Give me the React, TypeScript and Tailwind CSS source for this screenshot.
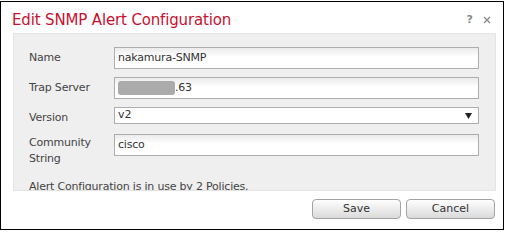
import React from "react"

const Field = ({ children }: { children: React.ReactNode }) => (
  <div className="w-[365px] h-[22px] border border-[#adadad] bg-[linear-gradient(#ebebeb,#ffffff_45%)] flex items-center pl-[3px] text-[11px] tracking-[-0.2px] text-[#333]">
    {children}
  </div>
)

const Label = ({ children }: { children: React.ReactNode }) => (
  <div className="w-[85px] shrink-0 text-[11px] leading-[16px] tracking-[-0.2px] text-[#444]">{children}</div>
)

export default function App() {
  return (
    <div className="w-[507px] h-[232px] bg-white font-['DejaVu_Sans',sans-serif]">
      <div className="mt-px w-[504px] h-[229px] border border-black flex flex-col">
        <div className="h-[31px] shrink-0 flex items-start justify-between pl-[11px] pr-[12px] pt-[8px]">
          <span className="text-[15px] leading-[20px] tracking-[-0.15px] text-[#c8102e]">Edit SNMP Alert Configuration</span>
          <div className="flex items-center gap-[10px] pt-[4px] text-[#8a8a8a]">
            <span className="text-[11px] font-bold leading-[12px]">?</span>
            <svg width="8" height="8" viewBox="0 0 8 8">
              <path d="M1 1L7 7M7 1L1 7" stroke="#8a8a8a" strokeWidth="1.4" />
            </svg>
          </div>
        </div>

        <div className="ml-[12px] w-[483px] h-[158px] shrink-0 overflow-hidden bg-[#efefef] border border-[#e4e4e4] pl-[15px] pt-[13px]">
          <div className="h-[22px] flex items-center">
            <Label>Name</Label>
            <Field>nakamura-SNMP</Field>
          </div>
          <div className="mt-[8px] h-[22px] flex items-center">
            <Label>Trap Server</Label>
            <Field>
              <span className="w-[57px] h-[14px] rounded-[3px] bg-[#ababab]" />
              <span>.63</span>
            </Field>
          </div>
          <div className="mt-[8px] h-[22px] flex items-center">
            <Label>Version</Label>
            <div className="self-start w-[365px] h-[17px] border border-[#adadad] bg-white flex items-center justify-between pl-[3px] pr-[6px] text-[11px] text-[#333]">
              <span>v2</span>
              <svg width="7" height="6" viewBox="0 0 7 6">
                <path d="M0 0H7L3.5 6Z" fill="#222" />
              </svg>
            </div>
          </div>
          <div className="mt-[5px] flex items-start">
            <div className="pt-px">
              <Label>
                Community
                <br />
                String
              </Label>
            </div>
            <Field>cisco</Field>
          </div>
          <div className="mt-[12px] text-[11px] leading-[16px] tracking-[-0.2px] text-[#444]">
            Alert Configuration is in use by 2 Policies.
          </div>
        </div>

        <div className="flex justify-end gap-[5px] pr-[8px] pt-[8px]">
          <button className="w-[89px] h-[20px] rounded-[4px] border border-[#a3a3a3] bg-[linear-gradient(#fefefe,#dadada)] text-[11px] text-[#333]">
            Save
          </button>
          <button className="w-[89px] h-[20px] rounded-[4px] border border-[#a3a3a3] bg-[linear-gradient(#fefefe,#dadada)] text-[11px] text-[#333]">
            Cancel
          </button>
        </div>
      </div>
    </div>
  )
}
